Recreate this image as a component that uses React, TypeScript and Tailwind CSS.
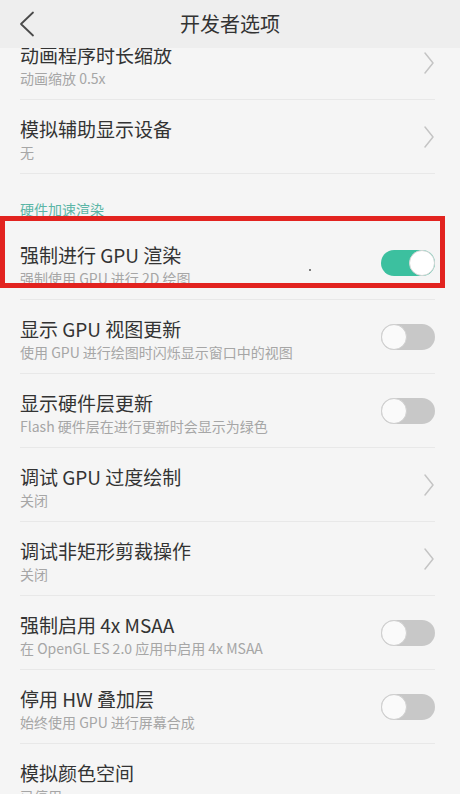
import React from "react";

type Item = {
  title: string;
  sub: string;
  kind: "arrow" | "on" | "off" | "none";
};

const FONT = { fontFamily: '"Noto Sans CJK SC", "Noto Sans", sans-serif' };

const before: Item[] = [
  { title: "动画程序时长缩放", sub: "动画缩放 0.5x", kind: "arrow" },
  { title: "模拟辅助显示设备", sub: "无", kind: "arrow" },
];

const after: Item[] = [
  { title: "显示 GPU 视图更新", sub: "使用 GPU 进行绘图时闪烁显示窗口中的视图", kind: "off" },
  { title: "显示硬件层更新", sub: "Flash 硬件层在进行更新时会显示为绿色", kind: "off" },
  { title: "调试 GPU 过度绘制", sub: "关闭", kind: "arrow" },
  { title: "调试非矩形剪裁操作", sub: "关闭", kind: "arrow" },
  { title: "强制启用 4x MSAA", sub: "在 OpenGL ES 2.0 应用中启用 4x MSAA", kind: "off" },
  { title: "停用 HW 叠加层", sub: "始终使用 GPU 进行屏幕合成", kind: "off" },
  { title: "模拟颜色空间", sub: "已停用", kind: "none" },
];

function Chevron() {
  return (
    <svg width="12" height="24" viewBox="0 0 12 24" fill="none">
      <polyline
        points="2,2 10,12 2,22"
        stroke="#c4c4c4"
        strokeWidth="1.5"
        strokeLinecap="round"
        strokeLinejoin="round"
      />
    </svg>
  );
}

function Toggle({ on }: { on: boolean }) {
  if (on) {
    return (
      <div className="relative w-[54px] h-[26px] rounded-full bg-[#3cc09f]">
        <div className="absolute right-0 top-0 w-[26px] h-[26px] rounded-full bg-white border border-[#d6d6d6]" />
      </div>
    );
  }
  return (
    <div className="relative w-[54px] h-[26px] rounded-full bg-[#c8c8c8]">
      <div className="absolute left-0 top-0 w-[26px] h-[26px] rounded-full bg-[#fafafa] border border-[#cfcfcf]" />
    </div>
  );
}

function Row({ item, children }: { item: Item; children?: React.ReactNode }) {
  return (
    <div className="relative h-[74px] pl-5 pr-[25px]">
      <div className="h-full flex items-center border-b border-[#e8e8e8]">
        <div className="flex-1 flex flex-col pt-[4px]">
          <div className="text-[19px] leading-[22px] text-[#333333]">{item.title}</div>
          <div className="mt-[4px] text-[14px] leading-[16px] text-[#a6a6a6]">{item.sub}</div>
        </div>
        <div className="flex items-center">
          {item.kind === "arrow" && <Chevron />}
          {(item.kind === "on" || item.kind === "off") && <Toggle on={item.kind === "on"} />}
        </div>
      </div>
      {children}
    </div>
  );
}

export default function App() {
  return (
    <div className="relative w-full h-[794px] overflow-hidden bg-[#f5f5f5]" style={FONT}>
      <div className="relative z-10 h-12 bg-[#eeeeee] flex items-center justify-center">
        <svg
          className="absolute left-[18px] top-[11px]"
          width="18"
          height="26"
          viewBox="0 0 18 26"
          fill="none"
        >
          <polyline
            points="15,1.5 3,13 15,24.5"
            stroke="#4a4a4a"
            strokeWidth="1.8"
            strokeLinecap="round"
            strokeLinejoin="round"
          />
        </svg>
        <span className="text-[20px] text-[#333333]">开发者选项</span>
      </div>

      <div className="-mt-[22px]">
        {before.map((it) => (
          <Row key={it.title} item={it} />
        ))}

        <div className="h-[52px] pl-5 pt-[22px]">
          <span className="text-[14px] leading-[18px] text-[#5bb5a6]">硬件加速渲染</span>
        </div>

        <Row item={{ title: "强制进行 GPU 渲染", sub: "强制使用 GPU 进行 2D 绘图", kind: "on" }}>
          <div className="absolute left-0 top-[-10px] w-[445px] h-[72px] border-[5px] border-[#e2231f] pointer-events-none" />
          <div className="absolute left-[309px] top-[43px] w-[2px] h-[2px] rounded-full bg-[#555555]" />
        </Row>

        {after.map((it) => (
          <Row key={it.title} item={it} />
        ))}
      </div>
    </div>
  );
}
